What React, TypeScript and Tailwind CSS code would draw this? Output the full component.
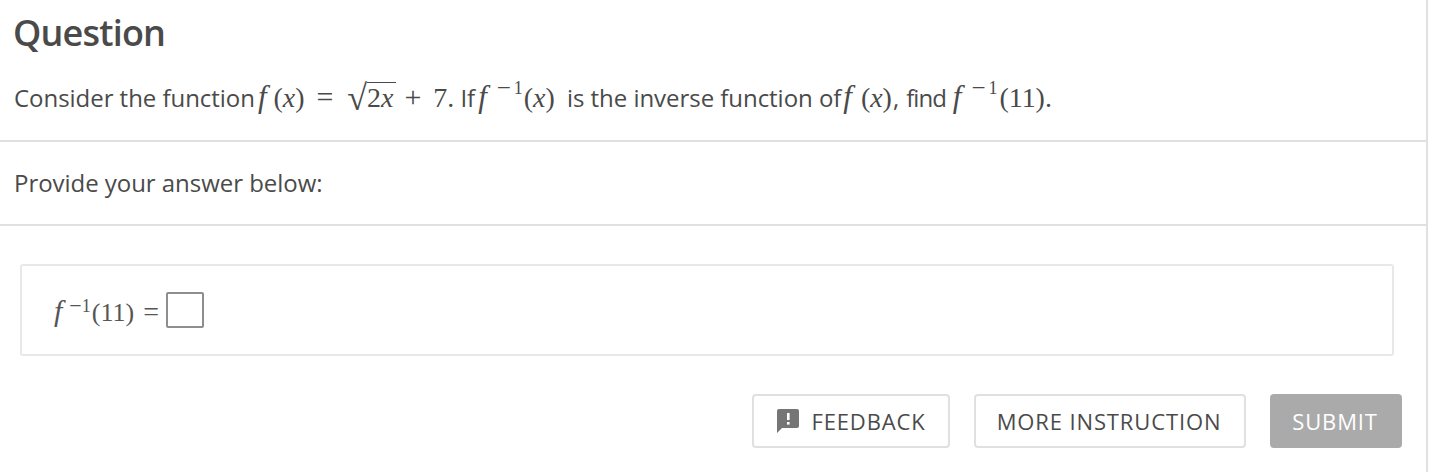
import React from "react";

const M = ({ children, className = "" }: { children: React.ReactNode; className?: string }) => (
  <span className={`font-['Liberation_Serif',serif] text-[28px] ${className}`}>{children}</span>
);
const F = ({ className = "" }: { className?: string }) => (
  <span className={`font-['Liberation_Serif',serif] text-[31px] italic ${className}`}>f</span>
);
const Sup = () => (
  <span className="relative -top-[13px] ml-[10px] font-['Liberation_Serif',serif]">
    <span className="relative top-[2px] text-[25px]">−</span>
    <span className="ml-[3px] text-[18px]">1</span>
  </span>
);
const X = () => (
  <>
    (<i>x</i>)
  </>
);

export default function App() {
  return (
    <div className="h-[472px] w-[1428px] overflow-hidden border-r-2 border-[#e0e0e0] bg-white font-['Open_Sans',sans-serif] text-[#4a4a4a]">
      <div className="h-[142px] border-b-2 border-[#e0e0e0] px-[14px]">
        <h1 className="-ml-[1px] pt-[9px] text-[36px] leading-[48px] font-semibold tracking-[-0.8px]">Question</h1>
        <p className="mt-[11px] flex h-[50px] items-baseline whitespace-pre text-[24px] tracking-[-0.04px]">
          Consider the function
          <F className="ml-[3px]" />
          <M className="ml-[7px]"><X /></M>
          <M className="ml-[12px] text-[30px]">=</M>
          <M className="relative top-[3px] ml-[14px] text-[36px]">√</M>
          <span className="border-t border-[#4a4a4a] pr-[3px] leading-[30px]">
            <M>2<i>x</i></M>
          </span>
          <M className="ml-[8px] text-[30px]">+</M>
          <M className="ml-[12px]">7.</M>
          {" If"}
          <F className="ml-[3px]" />
          <Sup />
          <M className="ml-[1px]"><X /></M>
          <span className="ml-[6px]">{" is the inverse function of"}</span>
          <F className="ml-[2px]" />
          <M className="ml-[9px]"><X /></M>
          <span className="ml-[1px]">{", "}</span>
          <span className="ml-[1px] tracking-[-1px]">find</span>
          <F className="ml-[7px]" />
          <Sup />
          <M className="ml-[2px]">(11).</M>
        </p>
      </div>
      <div className="flex h-[84px] items-center border-b-2 border-[#e0e0e0] px-[14px]">
        <p className="text-[24px] tracking-[-0.04px]">Provide your answer below:</p>
      </div>
      <div className="mx-[20px] mt-[38px] flex h-[92px] w-[1374px] items-center rounded-[3px] border-2 border-[#e8e8e8] pl-[32px] text-[#555]">
        <div className="flex items-baseline">
          <span className="font-['Liberation_Serif',serif] text-[30px] italic">f</span>
          <span className="relative -top-[9px] ml-[7px] font-['Liberation_Serif',serif]">
            <span className="relative top-[1px] text-[22px]">−</span>
            <span className="text-[18px]">1</span>
          </span>
          <span className="ml-[1px] font-['Liberation_Serif',serif] text-[26px]">(11)</span>
          <span className="ml-[9px] font-['Liberation_Serif',serif] text-[28px]">=</span>
        </div>
        <span className="ml-[7px] h-[36px] w-[38px] rounded-[2px] border-2 border-[#8e8e8e]" />
      </div>
      <div className="mt-[38px] flex justify-end gap-[24px] pr-[24px]">
        <button className="flex h-[54px] w-[198px] items-center justify-center gap-[11px] rounded-[4px] border-2 border-[#e0e0e0] text-[22px] font-medium tracking-[0.87px]">
          <svg width="24" height="25" viewBox="0 0 24 25" className="-mt-[1px]">
            <path d="M3 1h18a2 2 0 0 1 2 2v15a2 2 0 0 1-2 2H6l-5 5V3a2 2 0 0 1 2-2z" fill="#757575" />
            <rect x="11" y="5" width="2.6" height="7" fill="#fff" />
            <rect x="11" y="14" width="2.6" height="2.6" fill="#fff" />
          </svg>
          FEEDBACK
        </button>
        <button className="h-[54px] w-[272px] rounded-[4px] border-2 border-[#e0e0e0] pr-[2px] text-[22px] font-medium tracking-[0.87px]">
          MORE INSTRUCTION
        </button>
        <button className="h-[54px] w-[132px] rounded-[4px] bg-[#aaaaaa] pr-[2px] text-[22px] font-medium tracking-[0.87px] text-white">
          SUBMIT
        </button>
      </div>
    </div>
  );
}
